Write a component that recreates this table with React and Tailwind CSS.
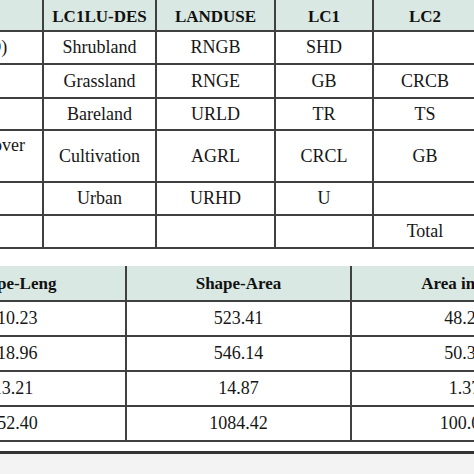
import React from "react";

// Top table: land cover classes
const topWidths = [201, 113, 119, 98, 102];
const topHeader = ["Land Cover", "LC1LU-DES", "LANDUSE", "LC1", "LC2"];
const topRows = [
  { h: "h-[33px]", cells: ["Rangeland (SHD)", "Shrubland", "RNGB", "SHD", ""] },
  { h: "h-[34px]", cells: ["Grass", "Grassland", "RNGE", "GB", "CRCB"] },
  { h: "h-[32px]", cells: ["Barren", "Bareland", "URLD", "TR", "TS"] },
  {
    h: "h-[52px]",
    cells: [
      <>
        Cultivated Land Cover
        <br />
        (Crop)
      </>,
      "Cultivation",
      "AGRL",
      "CRCL",
      "GB",
    ],
  },
  { h: "h-[33px]", cells: ["Built-up", "Urban", "URHD", "U", ""] },
  { h: "h-[33px]", cells: ["", "", "", "", "Total"] },
];

// Bottom table: shape stats
const bottomWidths = [226, 225, 225];
const bottomHeader = ["Shape-Leng", "Shape-Area", "Area in (%)"];
const bottomRows = [
  ["110.23", "523.41", "48.26"],
  ["118.96", "546.14", "50.36"],
  ["13.21", "14.87", "1.37"],
  ["252.40", "1084.42", "100.00"],
];

const Cell = ({ width, last, children, bold }) => (
  <div
    className={`flex shrink-0 items-center justify-center text-center ${
      last ? "" : "border-r-2 border-[#404040]"
    } ${bold ? "font-bold text-[17px] text-[#111111]" : "text-[18px] text-[#161616]"}`}
    style={{ width }}
  >
    {children}
  </div>
);

const App = () => {
  return (
    <div className="w-[474px] h-[474px] overflow-hidden bg-white font-['Liberation_Serif',serif] leading-[21px] flex flex-col">
      {/* Tabela superior */}
      <div className="-ml-[157px] flex flex-col">
        <div className="flex h-[32px] bg-[#dae8e3] border-b-2 border-[#404040]">
          {topHeader.map((t, i) => (
            <Cell key={i} width={topWidths[i]} last={i === 4} bold>
              <span className="pt-[3px]">{t}</span>
            </Cell>
          ))}
        </div>
        {topRows.map((row, r) => (
          <div key={r} className={`flex ${row.h} border-b-2 border-[#404040]`}>
            {row.cells.map((c, i) => (
              <Cell key={i} width={topWidths[i]} last={i === 4}>
                {c}
              </Cell>
            ))}
          </div>
        ))}
      </div>

      <div className="h-[17px] shrink-0" />

      {/* Tabela inferior */}
      <div className="-ml-[99px] flex flex-col">
        <div className="flex h-[36px] bg-[#dae8e3] border-b-2 border-[#404040]">
          {bottomHeader.map((t, i) => (
            <Cell key={i} width={bottomWidths[i]} last={i === 2} bold>
              {t}
            </Cell>
          ))}
        </div>
        {bottomRows.map((row, r) => (
          <div key={r} className="flex h-[35px] border-b-2 border-[#404040]">
            {row.map((c, i) => (
              <Cell key={i} width={bottomWidths[i]} last={i === 2}>
                {c}
              </Cell>
            ))}
          </div>
        ))}
      </div>

      <div className="h-[9px] shrink-0" />
      <div className="h-[3px] shrink-0 bg-[#333333]" />
      <div className="flex-1 bg-[#f3f3f3]" />
    </div>
  );
};

export default App;
